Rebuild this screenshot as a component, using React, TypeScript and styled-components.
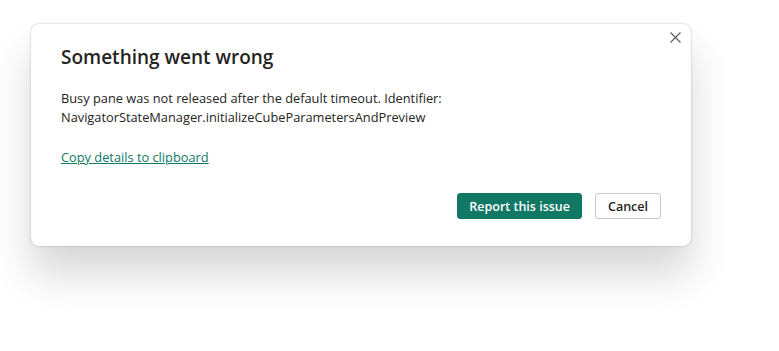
import React from "react";
import styled, { createGlobalStyle } from "styled-components";

const GlobalStyle = createGlobalStyle`
    body {
        margin: 0;
        background: #ffffff;
        font-family: "Segoe UI", "Open Sans", "Noto Sans", sans-serif;
    }
`;

const Page = styled.div`
    width: 779px;
    height: 351px;
    padding: 24px 0 0 31px;
    box-sizing: border-box;
    background: #ffffff;
    overflow: hidden;
`;

const Dialog = styled.div`
    position: relative;
    width: 660px;
    height: 222px;
    box-sizing: border-box;
    padding: 20px 30px 0 30px;
    background: #ffffff;
    border-radius: 8px;
    box-shadow: 0 0 2px rgba(0, 0, 0, 0.3), 0 28px 40px rgba(0, 0, 0, 0.16);
    display: flex;
    flex-direction: column;
`;

const CloseButton = styled.button`
    position: absolute;
    top: 2px;
    right: 5px;
    width: 22px;
    height: 22px;
    padding: 0;
    border: none;
    background: transparent;
    display: flex;
    align-items: center;
    justify-content: center;
    cursor: pointer;
`;

const Title = styled.h1`
    margin: 0;
    font-size: 19px;
    line-height: 26px;
    font-weight: 600;
    color: #252423;
`;

const Message = styled.p`
    margin: 19px 0 0 0;
    font-size: 12.8px;
    line-height: 19px;
    color: #252423;
`;

const Link = styled.a`
    margin-top: 21px;
    align-self: flex-start;
    font-size: 12.8px;
    line-height: 19px;
    color: #117865;
    text-decoration: underline;
    cursor: pointer;
`;

const Footer = styled.div`
    margin-top: 26px;
    display: flex;
    justify-content: flex-end;
    gap: 13px;
`;

const Button = styled.button<{ primary?: boolean }>`
    height: 26px;
    padding: 0 ${(p) => (p.primary ? "11px" : "12px")};
    box-sizing: border-box;
    border-radius: 3px;
    font-family: inherit;
    font-size: 12.5px;
    font-weight: 600;
    cursor: pointer;
    border: 1px solid ${(p) => (p.primary ? "#117865" : "#c8c6c4")};
    background: ${(p) => (p.primary ? "#117865" : "#ffffff")};
    color: ${(p) => (p.primary ? "#ffffff" : "#252423")};
`;

const App = () => {
    return (
        <Page>
            <GlobalStyle />
            <Dialog>
                <CloseButton aria-label="Close">
                    <svg width="11" height="11" viewBox="0 0 11 11">
                        <path d="M0.5 0.5 L10.5 10.5 M10.5 0.5 L0.5 10.5" stroke="#605e5c" strokeWidth="1.2" />
                    </svg>
                </CloseButton>
                <Title>Something went wrong</Title>
                <Message>
                    Busy pane was not released after the default timeout. Identifier:
                    <br />
                    NavigatorStateManager.initializeCubeParametersAndPreview
                </Message>
                <Link>Copy details to clipboard</Link>
                <Footer>
                    <Button primary>Report this issue</Button>
                    <Button>Cancel</Button>
                </Footer>
            </Dialog>
        </Page>
    );
};

export default App;
